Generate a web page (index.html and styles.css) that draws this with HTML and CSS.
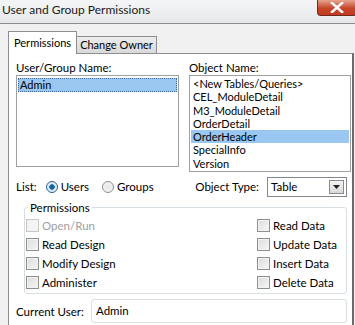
FILE: index.html
```html
<!DOCTYPE html>
<html lang="en">
<head>
    <meta charset="UTF-8">
    <title>User and Group Permissions</title>
    <link rel="stylesheet" href="styles.css">
</head>
<body>
    <div class="window">
        <div class="titlebar">
            <span class="title">User and Group Permissions</span>
            <div class="close-btn">
                <svg width="14" height="11" viewBox="0 0 14 11"><path d="M2 1 L12 10 M12 1 L2 10" stroke="#fff" stroke-width="2.6" stroke-linecap="square"/></svg>
            </div>
        </div>
        <div class="dialog">
            <div class="tabs">
                <div class="tab active">Permissions</div>
                <div class="tab">Change Owner</div>
            </div>
            <div class="panel">
                <div class="lists">
                    <div class="list-col">
                        <div class="label">User/Group Name:</div>
                        <div class="listbox users">
                            <div class="item selected focus">Admin</div>
                        </div>
                    </div>
                    <div class="list-col">
                        <div class="label">Object Name:</div>
                        <div class="listbox objects">
                            <div class="item">&lt;New Tables/Queries&gt;</div>
                            <div class="item">CEL_ModuleDetail</div>
                            <div class="item">M3_ModuleDetail</div>
                            <div class="item">OrderDetail</div>
                            <div class="item selected">OrderHeader</div>
                            <div class="item">SpecialInfo</div>
                            <div class="item">Version</div>
                        </div>
                    </div>
                </div>
                <div class="options-row">
                    <div class="list-type">
                        <span class="list-label">List:</span>
                        <span class="radio checked"></span><span class="radio-label">Users</span>
                        <span class="radio"></span><span class="radio-label">Groups</span>
                    </div>
                    <div class="object-type">
                        <span class="type-label">Object Type:</span>
                        <div class="combo">
                            <span class="combo-text">Table</span>
                            <span class="combo-btn">
                                <svg width="7" height="4" viewBox="0 0 7 4"><path d="M0 0 H7 L3.5 4 Z" fill="#222"/></svg>
                            </span>
                        </div>
                    </div>
                </div>
                <fieldset class="group">
                    <legend>Permissions</legend>
                    <div class="perm-cols">
                        <div class="perm-col">
                            <div class="check disabled"><span class="box"></span>Open/Run</div>
                            <div class="check"><span class="box"></span>Read Design</div>
                            <div class="check"><span class="box"></span>Modify Design</div>
                            <div class="check"><span class="box"></span>Administer</div>
                        </div>
                        <div class="perm-col">
                            <div class="check"><span class="box"></span>Read Data</div>
                            <div class="check"><span class="box"></span>Update Data</div>
                            <div class="check"><span class="box"></span>Insert Data</div>
                            <div class="check"><span class="box"></span>Delete Data</div>
                        </div>
                    </div>
                </fieldset>
                <div class="current-row">
                    <span class="current-label">Current User:</span>
                    <div class="current-box">Admin</div>
                </div>
            </div>
        </div>
    </div>
</body>
</html>
```

FILE: styles.css
```css
body {
    margin: 0;
    padding: 0;
    font-family: Lato, "Open Sans", sans-serif;
    font-size: 11.5px;
    color: #000;
    overflow: hidden;
}
.window {
    width: 355px;
    height: 325px;
    background: #f0f0f0;
    overflow: hidden;
}
.titlebar {
    height: 23px;
    display: flex;
    justify-content: space-between;
    align-items: flex-start;
    background: linear-gradient(to bottom, #f4f5f6, #e6e8ea);
    border-bottom: 1px solid #8c8c8c;
}
.title {
    font-size: 12px;
    color: #1a1a1a;
    padding-left: 2px;
    line-height: 20px;
}
.close-btn {
    width: 38px;
    height: 15px;
    margin-right: -2px;
    background: linear-gradient(to bottom, #e8a491, #c6462a 55%, #c23a1e);
    border: 1px solid #6e2a1e;
    border-top: none;
    border-radius: 0 0 4px 4px;
    display: flex;
    justify-content: center;
    align-items: center;
}
.dialog {
    padding: 7px 0 0 8px;
}
.tabs {
    display: flex;
    align-items: flex-end;
    height: 22px;
    position: relative;
    z-index: 1;
}
.tab {
    height: 16px;
    line-height: 16px;
    padding: 0 3px;
    font-size: 11px;
    border: 1px solid #8d8e91;
    border-left: none;
    border-bottom: none;
    background: linear-gradient(to bottom, #ececec, #d9d9d9);
}
.tab.active {
    height: 22px;
    line-height: 22px;
    padding: 0 5px;
    border-left: 1px solid #8d8e91;
    background: #fff;
    margin-bottom: -1px;
}
.panel {
    background: #fff;
    border: 1px solid #8d8e91;
    border-right: 2px solid #6b6b6b;
    height: 300px;
    margin-right: 1px;
    padding: 6px 4px 0 7px;
}
.lists {
    display: flex;
    gap: 10px;
}
.list-col {
    display: flex;
    flex-direction: column;
}
.label {
    height: 15px;
    line-height: 15px;
}
.listbox {
    border: 1px solid #a0a0a0;
    background: #fff;
    padding: 1px;
}
.users {
    width: 159px;
    height: 88px;
}
.objects {
    width: 158px;
    height: 93px;
    padding-top: 1px;
}
.item {
    height: 13.3px;
    line-height: 13.3px;
    font-size: 11px;
    padding-left: 2px;
    white-space: nowrap;
}
.item.selected {
    background: #99c7f0;
}
.item.focus {
    height: 12px;
    margin-top: 1px;
    border: 1px dotted #3d6b9e;
    padding-left: 1px;
    line-height: 12px;
}
.options-row {
    display: flex;
    justify-content: space-between;
    align-items: center;
    margin-top: 5px;
    height: 19px;
}
.list-type {
    display: flex;
    align-items: center;
}
.list-label {
    margin-right: 9px;
}
.radio {
    width: 12px;
    height: 12px;
    border-radius: 50%;
    border: 1px solid #8e8f8f;
    background: radial-gradient(circle, #e6e6e6, #f8f8f8);
    margin-right: 3px;
    box-sizing: border-box;
}
.radio.checked {
    background: radial-gradient(circle, #12507e 0, #1f76b3 2.5px, #cfe4f4 3px, #eaf3fa 5px);
    border-color: #2b5d8a;
}
.radio-label {
    margin-right: 13px;
}
.object-type {
    display: flex;
    align-items: center;
    margin-right: 1px;
}
.type-label {
    margin-right: 8px;
}
.combo {
    width: 78px;
    height: 18px;
    border: 1px solid #828790;
    display: flex;
    justify-content: space-between;
    align-items: center;
    background: #fff;
}
.combo-text {
    padding-left: 3px;
}
.combo-btn {
    width: 15px;
    height: 14px;
    margin-right: 2px;
    border: 1px solid #8a8a8a;
    background: linear-gradient(to bottom, #f4f4f4, #d8d8d8);
    display: flex;
    justify-content: center;
    align-items: center;
    box-sizing: border-box;
}
.group {
    margin: 5px 1px 0 8px;
    padding: 6px 4px 4px 1px;
    border: 1px solid #d5dfe5;
    border-radius: 3px;
    height: 81px;
}
.group legend {
    padding: 0 2px;
    margin-left: 2px;
    line-height: 13px;
}
.perm-cols {
    display: flex;
    justify-content: space-between;
    margin-top: -4px;
}
.perm-col {
    display: flex;
    flex-direction: column;
}
.perm-col:last-child {
    width: 85px;
}
.check {
    display: flex;
    align-items: center;
    height: 19px;
}
.box {
    width: 13px;
    height: 13px;
    box-sizing: border-box;
    border: 1px solid #8e8f8f;
    background: linear-gradient(135deg, #dcdcdc, #f6f6f6);
    box-shadow: inset 0 0 0 1px #f2f2f2;
    margin-right: 3px;
}
.check.disabled {
    color: #a0a0a0;
}
.check.disabled .box {
    border-color: #c8c8c8;
    background: #f4f4f4;
}
.current-row {
    display: flex;
    align-items: center;
    margin-top: 5px;
}
.current-label {
    width: 75px;
}
.current-box {
    flex: 1;
    margin-right: 1px;
    height: 24px;
    line-height: 22px;
    padding-left: 4px;
    border: 1px solid #d5dfe5;
    border-radius: 3px;
    box-sizing: border-box;
}
```
